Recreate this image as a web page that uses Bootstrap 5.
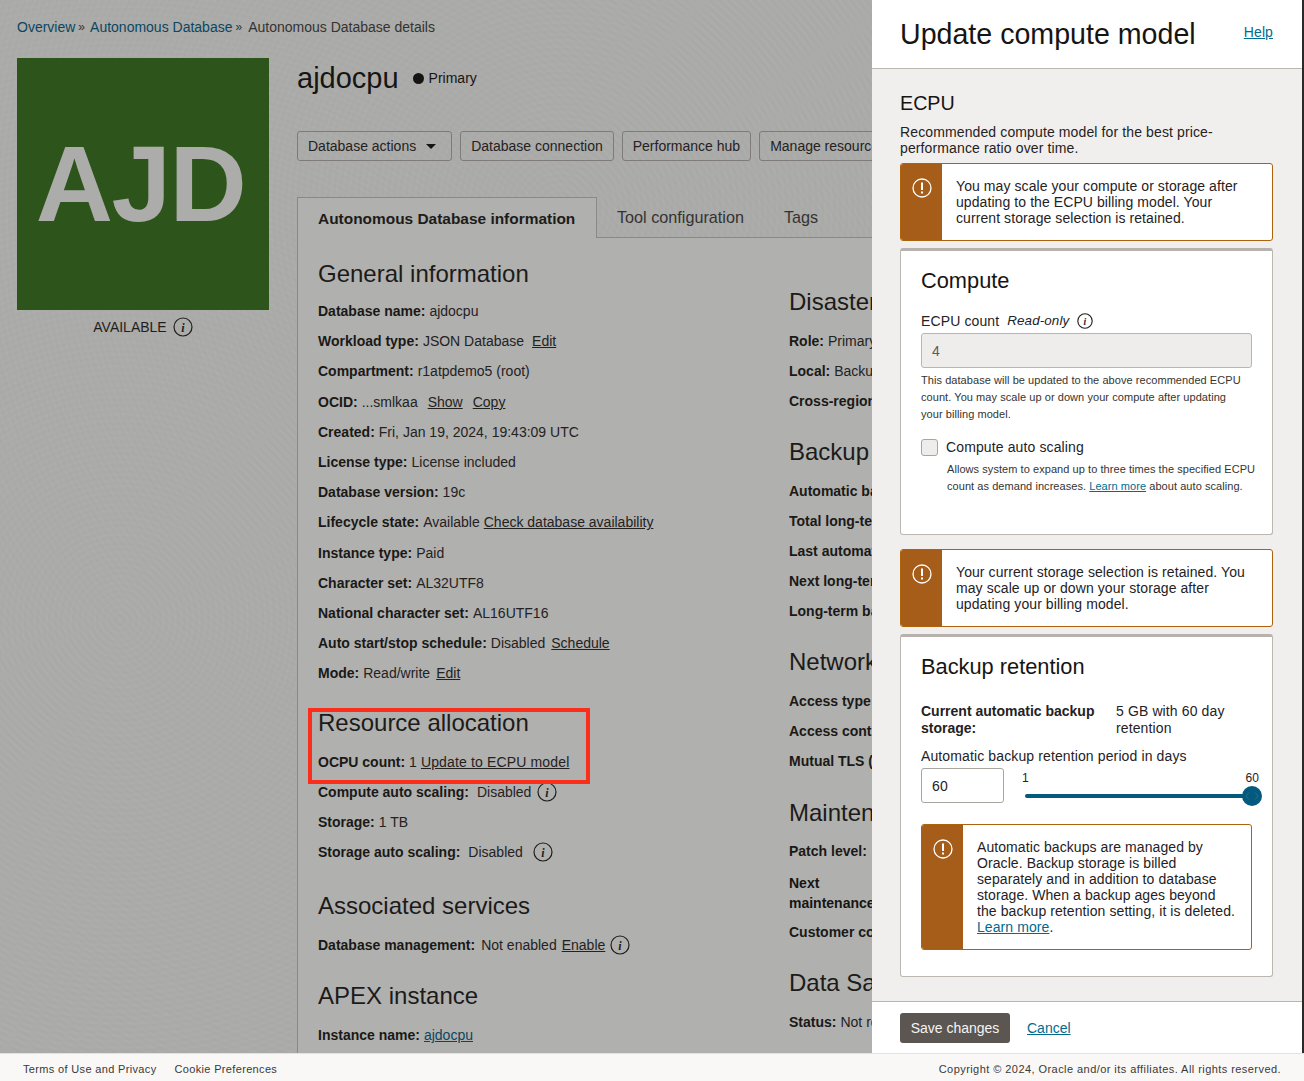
<!doctype html>
<html lang="en"><head><meta charset="utf-8"><title>Update compute model</title>
<link rel="stylesheet" href="https://cdn.jsdelivr.net/npm/bootstrap@5.3.0/dist/css/bootstrap.min.css">
<style>
html,body{height:1081px;overflow:hidden}
body{font-family:"Liberation Sans",Arial,sans-serif;font-size:14px;color:#161513;background:#fff;line-height:16px}
a{color:inherit}
.shell{height:1081px;display:flex;flex-direction:column}
.stage{height:1053px;display:flex;overflow:hidden}
.page{width:872px;flex:none;overflow:hidden;background-color:#a9a9a7;background-image:repeating-radial-gradient(circle at 560px 210px,rgba(255,255,255,.018) 0 3px,transparent 3px 6px),repeating-radial-gradient(circle at 120px 620px,rgba(255,255,255,.018) 0 3px,transparent 3px 6px);display:flex;flex-direction:column;padding:19px 0 0 17px}
.crumbs{font-size:14px;color:#353331;height:17px;white-space:nowrap;display:flex;gap:3px}
.crumbs a{color:#0b4660;text-decoration:none}
.crumbs .sep{font-size:12px;margin-right:-2px}
.crumbs .last-crumb{margin-left:5px}
.topgrid{display:flex;margin-top:23px}
.leftcol{width:252px;flex:none;margin-right:28px}
.tile{width:252px;height:252px;background:#2d551b;color:#acacaa;font-weight:700;font-size:107px;display:flex;align-items:center;justify-content:center;letter-spacing:-1.5px;padding-right:5px}
.state{display:flex;justify-content:center;align-items:center;gap:6px;margin-top:7px;color:#1f1e1c;height:20px}
.maincol{width:575px;flex:none;white-space:nowrap}
.dbtitle{display:flex;align-items:center;height:40px}
.dbtitle h1{font-size:29px;font-weight:400;margin:0;line-height:40px}
.dot{width:11px;height:11px;border-radius:50%;background:#161513;margin:0 5px 0 14px}
.actions{display:flex;gap:8px;margin-top:33px;width:600px}
.actbtn{border:1px solid #7e7b78;border-radius:3px;background:transparent;color:#24221f;font-size:14px;height:30px;padding:0 10px;display:flex;align-items:center;white-space:nowrap}
.caret{width:0;height:0;border-left:5px solid transparent;border-right:5px solid transparent;border-top:5px solid #161513;margin-left:10px;margin-right:5px}
.tabstrip{display:flex;margin-top:36px;height:41px;align-items:stretch;width:600px}
.tabon{border:1px solid #8b8987;border-bottom:0;background:#b0b0ae;padding:0 20px;width:300px;font-weight:700;font-size:15.45px;display:flex;align-items:center;padding-top:1px;color:#1d1c1a}
.taboff{font-size:16.2px;color:#353331;display:flex;align-items:center;padding-left:20px;padding-right:20px;flex:none;border-bottom:1px solid #8b8987}
.tabfill{flex:1;border-bottom:1px solid #8b8987}
.tabbody{border-left:1px solid #8b8987;background:#b0b0ae;display:flex;height:830px;padding-left:20px}
.colone{width:471px;flex:none}
.coltwo{width:84px;flex:none;overflow:hidden}
.sect{font-size:24px;line-height:30px;font-weight:400;margin:0;color:#1c1b19}
.s-gen{margin:21px 0 7px}
.s-res{margin:20px 0 8px}
.s-ass{margin:24px 0 9px}
.s-apx{margin:21px 0 9px}
.s-dis{margin:49px 0 9px}
.s-bak{margin:20px 0 9px}
.s-mai{margin:22px 0 8px}
.s-dat{margin:21px 0 8px}
.rowline{height:30.2px;display:flex;align-items:center;gap:4px;white-space:pre}
.rowline b{font-weight:700;color:#1a1917}
.rowline span{color:#24221f}
.rowline a{color:#24221f}
.rowline a.linkblue{color:#0b4660}
.rowline .pushed{margin-left:6px}
.rowline .pushed1{margin-left:4px}
.rowline .pushed2{margin-left:2px}
.rowline .airy{letter-spacing:.15px}
.rowline .nudge{margin-left:1px}
.twolines{line-height:20px;margin-top:7px;margin-bottom:4px}
.infoi{width:20px;height:20px;flex:none}
.mark-box{position:absolute;left:308px;top:708px;width:282px;height:76px;border:4px solid #fb2e1b;pointer-events:none}
.panel{width:430px;flex:none;background:#f1efed;display:flex;flex-direction:column}
.phead{background:#fff;height:69px;display:flex;justify-content:space-between;align-items:center;padding:0 29px 0 28px;border-bottom:1px solid #bcb6b0}
.phead h2{font-size:28.6px;font-weight:400;margin:0;line-height:32px}
.phead a{color:#006b8f;position:relative;top:-2px;letter-spacing:.1px}
.pbody{flex:1;padding:23px 29px 0 28px;overflow:hidden;letter-spacing:.12px;color:#24221f}
.pbody h3{font-size:19.7px;font-weight:400;margin:0;line-height:22px;letter-spacing:0;color:#161513}
.lead-txt{margin:10px 0 7px;line-height:16px}
.warnbox{display:flex;background:#fff;border:1px solid #ac630c;border-radius:3px;overflow:hidden;color:#24221f}
.warnbar{width:41px;flex:none;background:#a65d19;display:flex;justify-content:center;padding-top:14px}
.warntext{padding:14px;line-height:16px;flex:1;letter-spacing:.08px}
.warntext a{color:#006b8f}
.warntwo{margin-top:14px}
.warnthree{margin-top:21px}
.subcard{background:#fff;border:1px solid #bcb6b0;border-top:3px solid #b7b2ad;border-radius:3px;padding:0 20px;margin-top:7px}
.subcard h4{font-size:21.8px;font-weight:400;line-height:26px;margin:17px 0 0;letter-spacing:0;color:#161513}
.comp-card{height:287px}
.back-card{height:343px}
.cnt-label{margin-top:18px;height:18px}
.cnt-label em{font-size:13.4px}
.small-note{font-size:11px;line-height:17px;color:#36342f;letter-spacing:.06px;margin-top:4px;margin-right:8px}
.small-note a{color:#006b8f}
.note-ind{margin:5px -4px 0 26px}
.fakeinput{height:35px;background:#efedeb;border:1px solid #b9b5b1;border-radius:3px;padding:0 10px;display:flex;align-items:center;color:#5d5a57;margin-top:3px}
.cbx{width:17px;height:17px;border:1px solid #a8a5a1;border-radius:3px;background:#efedeb;flex:none}
.cbx-row{margin-top:15px;height:18px}
.cbx-row .cbx-label{margin-left:8px}
.curr-row{margin-top:23px}
.curr-row b{width:195px;flex:none;line-height:17px;letter-spacing:0}
.curr-row span{line-height:17px}
.ret-label{margin-top:11px}
.ret-row{margin-top:4px}
.valinput{width:83px;height:35px;border:1px solid #a9a5a1;border-radius:3px;display:flex;align-items:center;padding:0 10px;background:#fff;font-size:14px}
.slider{flex:1;position:relative;height:35px;margin-left:21px;margin-right:-10px;font-size:12px}
.slider .lo{position:absolute;left:-3px;top:2px}
.slider .hi{position:absolute;right:3px;top:2px}
.track{position:absolute;left:0;right:10px;top:26px;height:4px;background:#045a7e;border-radius:2px}
.knob{position:absolute;right:0;top:18px;width:20px;height:20px;border-radius:50%;background:#045a7e;display:flex;align-items:center;justify-content:center}
.pfoot{background:#fff;height:52px;border-top:1px solid #b9b5b1;display:flex;align-items:center;padding:0 28px;gap:17px}
.savebtn{background:#5b5652;border:0;color:#f5f4f2;border-radius:3px;height:30px;width:110px;font-size:14px}
.pfoot a{color:#006b8f}
.edge{background:#2b2a29}
.foot{height:28px;background:#f9f8f6;border-top:1px solid #e4e2df;display:flex;justify-content:space-between;align-items:center;font-size:11px;letter-spacing:.34px;color:#3b3936;padding:2px 23px 0}
.foot .lnks{display:flex;gap:18px}
.foot .copy{letter-spacing:.44px}
.brk{display:block}
</style></head>
<body>
<div class="shell position-relative">
 <div class="stage">
  <div class="page">
   <nav class="crumbs"><a href="#">Overview</a><span class="sep">»</span><a href="#" class="ms-1">Autonomous Database</a><span class="sep">»</span><span class="last-crumb">Autonomous Database details</span></nav>
   <div class="topgrid">
    <div class="leftcol">
     <div class="tile">AJD</div>
     <div class="state"><span>AVAILABLE</span><svg class="infoi" viewBox="0 0 20 20"><circle cx="10" cy="10" r="9" fill="none" stroke="#1f1e1c" stroke-width="1.2"/><text x="10" y="14.5" text-anchor="middle" font-family="Liberation Serif" font-style="italic" font-weight="700" font-size="12" fill="#1f1e1c">i</text></svg></div>
    </div>
    <div class="maincol">
     <div class="dbtitle"><h1>ajdocpu</h1><i class="dot"></i><span>Primary</span></div>
     <div class="actions">
      <div class="actbtn">Database actions<i class="caret"></i></div>
      <div class="actbtn">Database connection</div>
      <div class="actbtn">Performance hub</div>
      <div class="actbtn">Manage resource tags</div>
     </div>
     <div class="tabstrip"><div class="tabon">Autonomous Database information</div><div class="taboff">Tool configuration</div><div class="taboff">Tags</div><div class="tabfill"></div></div>
     <div class="tabbody">
      <div class="colone">
       <h5 class="sect s-gen">General information</h5>
       <div class="rowline"><b>Database name:</b><span>ajdocpu</span></div>
       <div class="rowline"><b>Workload type:</b><span>JSON Database</span><a href="#" class="pushed1">Edit</a></div>
       <div class="rowline"><b>Compartment:</b><span>r1atpdemo5 (root)</span></div>
       <div class="rowline"><b>OCID:</b><span>...smlkaa</span><a href="#" class="pushed">Show</a><a href="#" class="pushed">Copy</a></div>
       <div class="rowline"><b>Created:</b><span>Fri, Jan 19, 2024, 19:43:09 UTC</span></div>
       <div class="rowline"><b>License type:</b><span>License included</span></div>
       <div class="rowline"><b>Database version:</b><span>19c</span></div>
       <div class="rowline"><b>Lifecycle state:</b><span>Available</span><a href="#">Check database availability</a></div>
       <div class="rowline"><b>Instance type:</b><span>Paid</span></div>
       <div class="rowline"><b>Character set:</b><span>AL32UTF8</span></div>
       <div class="rowline"><b>National character set:</b><span>AL16UTF16</span></div>
       <div class="rowline"><b>Auto start/stop schedule:</b><span>Disabled</span><a href="#" class="pushed2">Schedule</a></div>
       <div class="rowline"><b>Mode:</b><span>Read/write</span><a href="#" class="pushed2">Edit</a></div>
       <h5 class="sect s-res">Resource allocation</h5>
       <div class="rowline"><b>OCPU count:</b><span>1</span><a href="#" class="airy">Update to ECPU model</a></div>
       <div class="rowline"><b>Compute auto scaling:</b><span class="ms-1">Disabled</span><svg class="infoi pushed2" viewBox="0 0 20 20"><circle cx="10" cy="10" r="9" fill="none" stroke="#1f1e1c" stroke-width="1.2"/><text x="10" y="14.5" text-anchor="middle" font-family="Liberation Serif" font-style="italic" font-weight="700" font-size="12" fill="#1f1e1c">i</text></svg></div>
       <div class="rowline"><b>Storage:</b><span>1 TB</span></div>
       <div class="rowline"><b>Storage auto scaling:</b><span class="ms-1">Disabled</span><svg class="infoi pushed" viewBox="0 0 20 20"><circle cx="10" cy="10" r="9" fill="none" stroke="#1f1e1c" stroke-width="1.2"/><text x="10" y="14.5" text-anchor="middle" font-family="Liberation Serif" font-style="italic" font-weight="700" font-size="12" fill="#1f1e1c">i</text></svg></div>
       <h5 class="sect s-ass">Associated services</h5>
       <div class="rowline"><b>Database management:</b><span class="pushed2">Not enabled</span><a href="#" class="nudge">Enable</a><svg class="infoi nudge" viewBox="0 0 20 20"><circle cx="10" cy="10" r="9" fill="none" stroke="#1f1e1c" stroke-width="1.2"/><text x="10" y="14.5" text-anchor="middle" font-family="Liberation Serif" font-style="italic" font-weight="700" font-size="12" fill="#1f1e1c">i</text></svg></div>
       <h5 class="sect s-apx">APEX instance</h5>
       <div class="rowline"><b>Instance name:</b><a href="#" class="linkblue">ajdocpu</a></div>
      </div>
      <div class="coltwo">
       <h5 class="sect s-dis">Disaster recovery</h5>
       <div class="rowline"><b>Role:</b><span>Primary</span></div>
       <div class="rowline"><b>Local:</b><span>Backup</span></div>
       <div class="rowline"><b>Cross-region</b></div>
       <h5 class="sect s-bak">Backup</h5>
       <div class="rowline"><b>Automatic backup</b></div>
       <div class="rowline"><b>Total long-term</b></div>
       <div class="rowline"><b>Last automatic</b></div>
       <div class="rowline"><b>Next long-term</b></div>
       <div class="rowline"><b>Long-term backup</b></div>
       <h5 class="sect s-bak">Network</h5>
       <div class="rowline"><b>Access type</b></div>
       <div class="rowline"><b>Access control</b></div>
       <div class="rowline"><b>Mutual TLS (</b></div>
       <h5 class="sect s-mai">Maintenance</h5>
       <div class="rowline"><b>Patch level:</b></div>
       <div class="twolines"><b>Next<span class="brk">maintenance</span></b></div>
       <div class="rowline"><b>Customer contacts</b></div>
       <h5 class="sect s-dat">Data Safe</h5>
       <div class="rowline"><b>Status:</b><span>Not registered</span></div>
      </div>
     </div>
    </div>
   </div>
  </div>
  <aside class="panel">
   <div class="phead"><h2>Update compute model</h2><a href="#">Help</a></div>
   <div class="pbody">
    <h3>ECPU</h3>
    <p class="lead-txt">Recommended compute model for the best price-performance ratio over time.</p>
    <div class="warnbox"><div class="warnbar"><svg width="20" height="20" viewBox="0 0 20 20"><circle cx="10" cy="10" r="9" fill="none" stroke="#fff" stroke-width="1.3"/><rect x="9" y="4.5" width="2" height="7.5" fill="#fff"/><rect x="9" y="13.5" width="2" height="2" fill="#fff"/></svg></div><div class="warntext">You may scale your compute or storage after updating to the ECPU billing model. Your current storage selection is retained.</div></div>
    <div class="subcard comp-card">
     <h4>Compute</h4>
     <div class="d-flex align-items-center cnt-label"><span>ECPU count</span><em class="ms-2">Read-only</em><svg class="ms-2" width="16" height="16" viewBox="0 0 20 20"><circle cx="10" cy="10" r="9" fill="none" stroke="#1f1e1c" stroke-width="1.4"/><text x="10" y="14.5" text-anchor="middle" font-family="Liberation Serif" font-style="italic" font-weight="700" font-size="12" fill="#1f1e1c">i</text></svg></div>
     <div class="fakeinput">4</div>
     <div class="small-note">This database will be updated to the above recommended ECPU count. You may scale up or down your compute after updating your billing model.</div>
     <div class="d-flex align-items-center cbx-row"><span class="cbx"></span><span class="cbx-label">Compute auto scaling</span></div>
     <div class="small-note note-ind">Allows system to expand up to three times the specified ECPU count as demand increases. <a href="#">Learn more</a> about auto scaling.</div>
    </div>
    <div class="warnbox warntwo"><div class="warnbar"><svg width="20" height="20" viewBox="0 0 20 20"><circle cx="10" cy="10" r="9" fill="none" stroke="#fff" stroke-width="1.3"/><rect x="9" y="4.5" width="2" height="7.5" fill="#fff"/><rect x="9" y="13.5" width="2" height="2" fill="#fff"/></svg></div><div class="warntext">Your current storage selection is retained. You may scale up or down your storage after updating your billing model.</div></div>
    <div class="subcard back-card">
     <h4>Backup retention</h4>
     <div class="d-flex curr-row"><b>Current automatic backup storage:</b><span>5 GB with 60 day retention</span></div>
     <div class="ret-label">Automatic backup retention period in days</div>
     <div class="d-flex ret-row"><div class="valinput">60</div><div class="slider"><span class="lo">1</span><span class="hi">60</span><div class="track"></div><div class="knob"><svg width="14" height="8" viewBox="0 0 14 8"><path d="M4 .5 1 4l3 3.5M10 .5 13 4l-3 3.5" fill="none" stroke="#2b6a85" stroke-width="1"/></svg></div></div></div>
     <div class="warnbox warnthree"><div class="warnbar"><svg width="20" height="20" viewBox="0 0 20 20"><circle cx="10" cy="10" r="9" fill="none" stroke="#fff" stroke-width="1.3"/><rect x="9" y="4.5" width="2" height="7.5" fill="#fff"/><rect x="9" y="13.5" width="2" height="2" fill="#fff"/></svg></div><div class="warntext">Automatic backups are managed by Oracle. Backup storage is billed separately and in addition to database storage. When a backup ages beyond the backup retention setting, it is deleted. <a href="#">Learn more</a>.</div></div>
    </div>
   </div>
   <div class="pfoot"><button class="savebtn">Save changes</button><a href="#">Cancel</a></div>
  </aside>
  <div class="flex-grow-1 edge"></div>
 </div>
 <footer class="foot"><div class="lnks"><span>Terms of Use and Privacy</span><span>Cookie Preferences</span></div><span class="copy">Copyright © 2024, Oracle and/or its affiliates. All rights reserved.</span></footer>
 <div class="mark-box"></div>
</div>
<script src="https://cdn.jsdelivr.net/npm/bootstrap@5.3.0/dist/js/bootstrap.bundle.min.js"></script>
</body></html>
